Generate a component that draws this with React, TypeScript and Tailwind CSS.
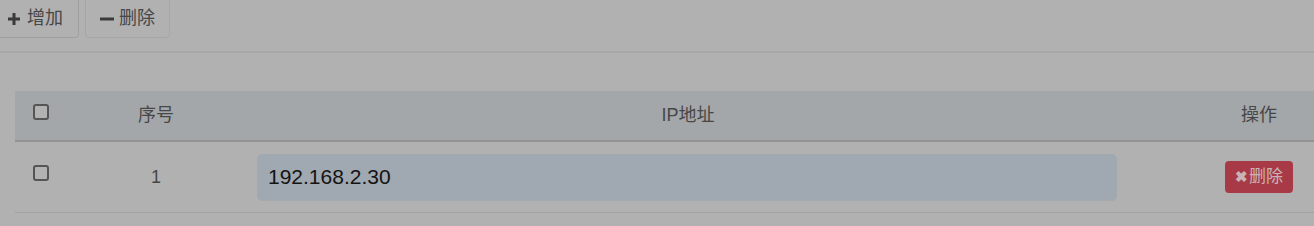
function PlusIcon() {
  return (
    <svg width="12" height="12" viewBox="0 0 12 12" className="shrink-0">
      <path d="M6 0v12M0 6h12" stroke="#3a3a3a" strokeWidth="3" />
    </svg>
  );
}

function MinusIcon() {
  return (
    <svg width="14" height="12" viewBox="0 0 14 12" className="shrink-0">
      <path d="M0 6h14" stroke="#3a3a3a" strokeWidth="3" />
    </svg>
  );
}

function App() {
  return (
    <div
      className="w-[1314px] h-[226px] overflow-hidden bg-[#b1b1b1] text-[#474747]"
      style={{ fontFamily: '"Liberation Sans", "Noto Sans CJK SC", sans-serif' }}
    >
      {/* toolbar */}
      <div className="flex gap-[6px] -ml-[7px] h-[53px] border-b-2 border-[#a8a8a8]">
        <button className="h-[39px] -mt-[1px] pl-[14px] pr-[15px] flex items-center gap-[7px] border border-[#9f9f9f] rounded-b-[4px] bg-[#b1b1b1] text-[18px] text-[#474747]">
          <PlusIcon />
          增加
        </button>
        <button className="h-[39px] -mt-[1px] pl-[14px] pr-[14px] flex items-center gap-[5px] border border-[#a6a6a6] rounded-b-[4px] bg-[#b1b1b1] text-[18px] text-[#474747]">
          <MinusIcon />
          删除
        </button>
      </div>

      {/* table */}
      <div className="pt-[38px] pl-[15px]">
        <div className="w-[1400px]">
          <div className="flex items-center h-[51px] bg-[#a3a7aa] border-b-2 border-[#939393] text-[18px]">
            <div className="w-[51px] shrink-0 flex justify-center pl-[1px]">
              <span className="block w-[16px] h-[16px] border-2 border-[#555] rounded-[3px] bg-[#b2b2b2] -mt-[8px]" />
            </div>
            <div className="w-[180px] shrink-0 text-center">序号</div>
            <div className="w-[884px] shrink-0 text-center">IP地址</div>
            <div className="w-[258px] shrink-0 text-center">操作</div>
          </div>
          <div className="flex items-center h-[71px] border-b border-[#a3a3a3] text-[18px]">
            <div className="w-[51px] shrink-0 flex justify-center pl-[1px]">
              <span className="block w-[16px] h-[16px] border-2 border-[#555] rounded-[3px] bg-[#b2b2b2] -mt-[9px]" />
            </div>
            <div className="w-[180px] shrink-0 text-center">1</div>
            <div className="w-[884px] shrink-0 pl-[11px] pr-[13px]">
              <div className="h-[47px] flex items-center px-[10px] rounded-[5px] border border-[#a4a9ad] bg-[#a0a8b1] text-[21px] text-[#141414]">
                192.168.2.30
              </div>
            </div>
            <div className="w-[258px] shrink-0 flex justify-center">
              <button className="h-[32px] w-[68px] flex items-center justify-center rounded-[4px] bg-[#a83a48] text-[#c9b3b5] text-[17px]">
                <span className="text-[15px] font-bold mr-[1px]">✖</span>删除
              </button>
            </div>
          </div>
        </div>
      </div>
    </div>
  );
}

export default App;
